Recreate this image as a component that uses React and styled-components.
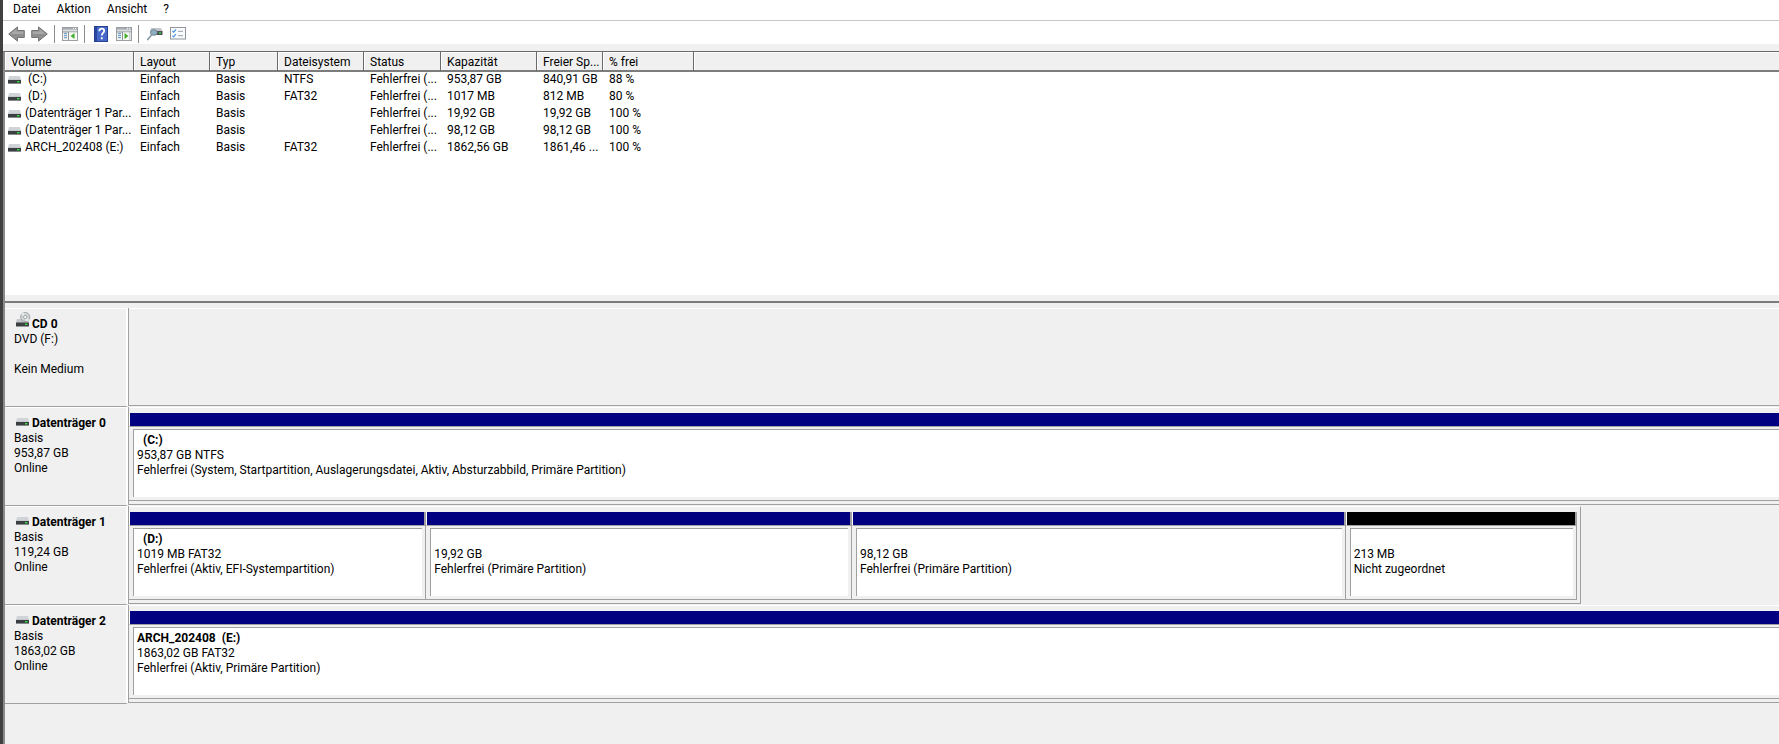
import React from 'react';
import styled, { createGlobalStyle, css } from 'styled-components';

const GlobalStyle = createGlobalStyle`
	*, *::before, *::after {
		box-sizing: border-box;
	}

	html, body, #root {
		height: 100%;
	}

	body {
		margin: 0;
		background: #f0f0f0;
		color: #000;
		font: 12px/15px Roboto, 'Open Sans', sans-serif;
		overflow: hidden;
	}

	button {
		font: inherit;
		color: inherit;
		background: none;
		border: none;
		padding: 0;
		margin: 0;
	}
`

const Window = styled.div`
	display: flex;
	flex-direction: column;
	min-height: 100%;
	border-left: 3px solid #404040;
	background: #f0f0f0;
`

const MenuBar = styled.nav`
	display: flex;
	gap: 16px;
	height: 21px;
	padding: 1px 10px 3px;
	background: #fff;
	border-bottom: 1px solid #c6c6c6;
`

const MenuItem = styled.button`
	line-height: 16px;
`

const ToolBar = styled.div`
	display: flex;
	align-items: center;
	height: 23px;
	padding: 2px 0 0 2px;
	background: #fff;
`

const ToolButton = styled.button`
	display: flex;
	justify-content: center;
	width: ${({ $wide }) => $wide ? 24 : 22}px;

	svg {
		display: block;
	}
`

const Separator = styled.span`
	width: 1px;
	height: 18px;
	margin: 0 4px 0 3px;
	background: #8c8c8c;
`

const Panels = styled.main`
	display: flex;
	flex-direction: column;
	flex: 1;
	margin-top: 7px;
	border-top: 1px solid #696969;
	border-left: 2px solid #8a8a8a;
`

const VolumePane = styled.section`
	height: 243px;
	background: #fff;
	overflow: hidden;
`

const Splitter = styled.div`
	height: 8px;
	margin-bottom: 5px;
	border-bottom: 2px solid #7c7c7c;
	background: #f0f0f0;
`

const VolumeTable = styled.table`
	width: 100%;
	table-layout: fixed;
	border-collapse: separate;
	border-spacing: 0;
	white-space: pre;
`

const HeadCell = styled.th`
	height: 20px;
	padding: 3px 0 0 6px;
	font-weight: normal;
	text-align: left;
	background: #f0f0f0;
	border-bottom: 2px solid #7c7c7c;
	border-right: ${({ $last }) => $last ? 'none' : '1px solid #696969'};
	box-shadow: inset 1px 1px #fff;
`

const Cell = styled.td`
	height: 17px;
	padding: 0 0 2px 6px;
`

const VolumeName = styled.span`
	display: flex;
	align-items: center;
	gap: 4px;
	margin-left: -3px;

	svg {
		flex: none;
	}
`

const DiskRow = styled.section`
	display: flex;
	height: 99px;
`

const DiskLabel = styled.div`
	width: 123px;
	flex: none;
	padding: 8px 0 0 9px;
	border-top: 1px solid #fff;
	border-right: 2px solid #fff;
	border-bottom: 1px solid #a0a0a0;

	p {
		margin: 0;
		min-height: 15px;
	}
`

const DiskTitle = styled.h2`
	display: flex;
	align-items: flex-end;
	gap: ${({ $optical }) => $optical ? 1 : 3}px;
	height: 15px;
	margin: 0;
	padding-left: 2px;
	font-size: 12px;
	line-height: 15px;

	svg {
		flex: none;
		margin-bottom: 5px;
	}
`

const DiskGraph = styled.div`
	flex: 1;
	min-width: 0;
	margin-bottom: 1px;
	border-left: 1px solid #a0a0a0;
`

const Extent = styled.div`
	display: flex;
	width: ${({ $width }) => $width};
	height: 100%;
	border-top: 1px solid #fff;
	border-bottom: 1px solid #a0a0a0;
	${({ $closed }) => $closed && css`
		padding-right: 3px;
		border-right: 1px solid #a0a0a0;
	`}
	padding-top: ${({ $empty }) => $empty ? 0 : 5}px;
	padding-bottom: 3px;
`

const Partition = styled.div`
	display: flex;
	flex-direction: column;
	flex: ${({ $size }) => $size} 1 0;
	min-width: 0;
	border-right: ${({ $open }) => $open ? 'none' : '1px solid #a0a0a0'};
	border-bottom: 1px solid #a0a0a0;
`

const PartitionBar = styled.div`
	height: 14px;
	background: ${({ $unallocated }) => $unallocated ? '#000' : '#000080'};
	border-left: 1px solid #fff;
	border-right: ${({ $open }) => $open ? 'none' : '1px solid #a0a0a0'};
	border-bottom: 1px solid #a0a0a0;
`

const PartitionBody = styled.div`
	flex: 1;
	margin: 2px ${({ $open }) => $open ? 0 : 3}px 3px 4px;
	padding: 3px 0 0 3px;
	background: #fff;
	border-top: 1px solid #a0a0a0;
	border-left: 1px solid #a0a0a0;
	white-space: pre;
	overflow: hidden;

	strong, span {
		display: block;
		height: 15px;
	}
`

const columns = [
	{ title: 'Volume', width: 129 },
	{ title: 'Layout', width: 76 },
	{ title: 'Typ', width: 68 },
	{ title: 'Dateisystem', width: 86 },
	{ title: 'Status', width: 77 },
	{ title: 'Kapazität', width: 96 },
	{ title: 'Freier Sp...', width: 66 },
	{ title: '% frei', width: 91 }
]

const volumes = [
	[' (C:)', 'Einfach', 'Basis', 'NTFS', 'Fehlerfrei (...', '953,87 GB', '840,91 GB', '88 %'],
	[' (D:)', 'Einfach', 'Basis', 'FAT32', 'Fehlerfrei (...', '1017 MB', '812 MB', '80 %'],
	['(Datenträger 1 Par...', 'Einfach', 'Basis', '', 'Fehlerfrei (...', '19,92 GB', '19,92 GB', '100 %'],
	['(Datenträger 1 Par...', 'Einfach', 'Basis', '', 'Fehlerfrei (...', '98,12 GB', '98,12 GB', '100 %'],
	['ARCH_202408 (E:)', 'Einfach', 'Basis', 'FAT32', 'Fehlerfrei (...', '1862,56 GB', '1861,46 ...', '100 %']
]

const disks = [
	{
		name: 'CD 0',
		optical: true,
		info: ['DVD (F:)', '', 'Kein Medium'],
		width: '100%',
		partitions: []
	},
	{
		name: 'Datenträger 0',
		info: ['Basis', '953,87 GB', 'Online'],
		width: '100%',
		open: true,
		partitions: [
			{
				label: '  (C:)',
				size: '953,87 GB NTFS',
				status: 'Fehlerfrei (System, Startpartition, Auslagerungsdatei, Aktiv, Absturzabbild, Primäre Partition)',
				share: 1
			}
		]
	},
	{
		name: 'Datenträger 1',
		info: ['Basis', '119,24 GB', 'Online'],
		width: '88%',
		partitions: [
			{ label: '  (D:)', size: '1019 MB FAT32', status: 'Fehlerfrei (Aktiv, EFI-Systempartition)', share: 297 },
			{ label: '', size: '19,92 GB', status: 'Fehlerfrei (Primäre Partition)', share: 426 },
			{ label: '', size: '98,12 GB', status: 'Fehlerfrei (Primäre Partition)', share: 494 },
			{ label: '', size: '213 MB', status: 'Nicht zugeordnet', share: 231, unallocated: true }
		]
	},
	{
		name: 'Datenträger 2',
		info: ['Basis', '1863,02 GB', 'Online'],
		width: '100%',
		open: true,
		partitions: [
			{ label: 'ARCH_202408  (E:)', size: '1863,02 GB FAT32', status: 'Fehlerfrei (Aktiv, Primäre Partition)', share: 1 }
		]
	}
]

const DriveIcon = () => (
	<svg width="13" height="8" viewBox="0 0 13 8" aria-hidden="true">
		<path d="M1 0h11l1 4H0z" fill="#d0d3d7" />
		<rect y="3.5" width="13" height="4.5" fill="#b9bcc0" />
		<rect y="4" width="13" height="3.4" fill="#3b3f42" />
		<rect x="9" y="5" width="2.4" height="1.4" fill="#35e03c" />
	</svg>
)

const OpticalIcon = () => (
	<svg width="15" height="15" viewBox="0 0 15 15" aria-hidden="true">
		<path d="M1 7h11l1 4H0z" fill="#c3c6ca" />
		<circle cx="9.2" cy="5" r="4.6" fill="#cfd3d3" stroke="#979b9b" strokeWidth=".8" />
		<path d="M9.2 5 5.3 2.4A4.8 4.8 0 0 1 8 .4zM9.2 5l3.9 2.6a4.8 4.8 0 0 1-2.7 2z" fill="#e8ebeb" />
		<circle cx="9.2" cy="5" r="1.6" fill="#fff" stroke="#8f9494" strokeWidth=".8" />
		<rect y="10.5" width="13" height="4" fill="#3b3f42" />
		<rect x="9" y="11.6" width="2.4" height="1.4" fill="#35e03c" />
	</svg>
)

const ArrowIcon = ({ flip }) => (
	<svg width="17" height="16" viewBox="0 0 17 16" aria-hidden="true">
		<g transform={flip ? 'matrix(-1 0 0 1 17 0)' : undefined}>
			<path d="M.7 8 9.5.9v3.6h6.8v7H9.5v3.6z" fill="#8e8e8e" stroke="#757575" />
			<path d="M2.5 8 8.6 3v2.5h6.7V8z" fill="#a8a8a8" />
		</g>
	</svg>
)

const TreeIcon = ({ right }) => (
	<svg width="16" height="14" viewBox="0 0 16 14" aria-hidden="true">
		<rect x=".5" y=".5" width="15" height="13" fill="#f4f4f2" stroke="#9b9fa3" />
		<rect x="1" y="1" width="14" height="1.7" fill="#a5abb3" />
		<path d="M11 1.4h1M13 1.4h1" stroke="#fff" />
		<path d="M1 4h14" stroke="#c2c6cb" />
		<path d="M6.5 5v8M1 5h14" stroke="#8d949c" />
		<path d="M2 6.7h3M2 8.7h3M2 10.7h3" stroke="#5a8fc4" />
		<rect x="7" y="5.5" width="8" height="7.5" fill="#f8faf6" />
		<path d={right ? 'M8.5 6v6l4-3z' : 'M12.5 6v6l-4-3z'} fill="#43ae2e" />
		{right && <path d="M13.8 5v8" stroke="#a5abb3" strokeWidth=".7" />}
	</svg>
)

const HelpIcon = () => (
	<svg width="14" height="16" viewBox="0 0 14 16" aria-hidden="true">
		<rect x=".5" y=".5" width="13" height="15" fill="#4568c9" stroke="#26418f" />
		<path d="M1 1h2v14H1z" fill="#2b479c" />
		<path d="M5.3 5.2c0-1.8 1.2-2.5 2.5-2.5 1.5 0 2.4.8 2.4 2.2 0 2-2.4 2-2.4 4.6M7.8 11.3v1.9" fill="none" stroke="#fff" strokeWidth="1.8" />
	</svg>
)

const RescanIcon = () => (
	<svg width="16" height="14" viewBox="0 0 16 14" aria-hidden="true">
		<path d="M4 1h10l1.5 3H3z" fill="#c3c7cb" />
		<path d="M4 4h11.5v4H4z" fill="#4b5155" />
		<rect x="12" y="5.3" width="2" height="1.3" fill="#35e03c" />
		<ellipse cx="6.8" cy="5.5" rx="3.4" ry="2.8" fill="#8fb0c2" stroke="#71848f" />
		<path d="m4.5 8-3.7 4.5" stroke="#8b9ba5" strokeWidth="1.8" strokeLinecap="round" />
	</svg>
)

const SettingsIcon = () => (
	<svg width="16" height="13" viewBox="0 0 16 13" aria-hidden="true">
		<rect x=".5" y=".5" width="15" height="11.5" fill="#fafbfc" stroke="#8f959a" />
		<path d="m2.5 4 1.2 1.2L6 2.3M2.5 8.7l1.2 1.2L6 7" fill="none" stroke="#3d8fe0" strokeWidth="1.1" />
		<path d="M8 4.3h5M8 8.7h5" stroke="#9ba0a5" />
	</svg>
)

const Disk = ({ name, info, optical, open, width, partitions }) => (
	<DiskRow>
		<DiskLabel>
			<DiskTitle $optical={optical}>
				{optical ? <OpticalIcon /> : <DriveIcon />}
				{name}
			</DiskTitle>
			{info.map((line, i) => <p key={i}>{line}</p>)}
		</DiskLabel>
		<DiskGraph>
			<Extent $width={width} $closed={!open && partitions.length > 0} $empty={!partitions.length}>
				{partitions.map((part, i) => (
					<Partition key={i} $size={part.share} $open={open}>
						<PartitionBar $unallocated={part.unallocated} $open={open} />
						<PartitionBody $open={open}>
							<strong>{part.label}</strong>
							<span>{part.size}</span>
							<span>{part.status}</span>
						</PartitionBody>
					</Partition>
				))}
			</Extent>
		</DiskGraph>
	</DiskRow>
)

export default function App() {
	return (
		<React.Fragment>
			<GlobalStyle />
			<Window>
				<MenuBar>
					{['Datei', 'Aktion', 'Ansicht', '?'].map(item => <MenuItem key={item}>{item}</MenuItem>)}
				</MenuBar>
				<ToolBar>
					<ToolButton aria-label="Zurück"><ArrowIcon /></ToolButton>
					<ToolButton $wide aria-label="Vorwärts"><ArrowIcon flip /></ToolButton>
					<Separator />
					<ToolButton aria-label="Konsolenstruktur"><TreeIcon /></ToolButton>
					<Separator />
					<ToolButton $wide aria-label="Hilfe"><HelpIcon /></ToolButton>
					<ToolButton aria-label="Aktionsbereich"><TreeIcon right /></ToolButton>
					<Separator />
					<ToolButton $wide aria-label="Aktualisieren"><RescanIcon /></ToolButton>
					<ToolButton aria-label="Einstellungen"><SettingsIcon /></ToolButton>
				</ToolBar>
				<Panels>
					<VolumePane>
						<VolumeTable>
							<colgroup>
								{columns.map(col => <col key={col.title} style={{ width: col.width }} />)}
								<col />
							</colgroup>
							<thead>
								<tr>
									{columns.map(col => <HeadCell key={col.title} scope="col">{col.title}</HeadCell>)}
									<HeadCell as="td" $last />
								</tr>
							</thead>
							<tbody>
								{volumes.map(([name, ...values], row) => (
									<tr key={row}>
										<Cell><VolumeName><DriveIcon />{name}</VolumeName></Cell>
										{values.map((value, i) => <Cell key={i}>{value}</Cell>)}
										<Cell />
									</tr>
								))}
							</tbody>
						</VolumeTable>
					</VolumePane>
					<Splitter />
					{disks.map(disk => <Disk key={disk.name} {...disk} />)}
				</Panels>
			</Window>
		</React.Fragment>
	)
}
